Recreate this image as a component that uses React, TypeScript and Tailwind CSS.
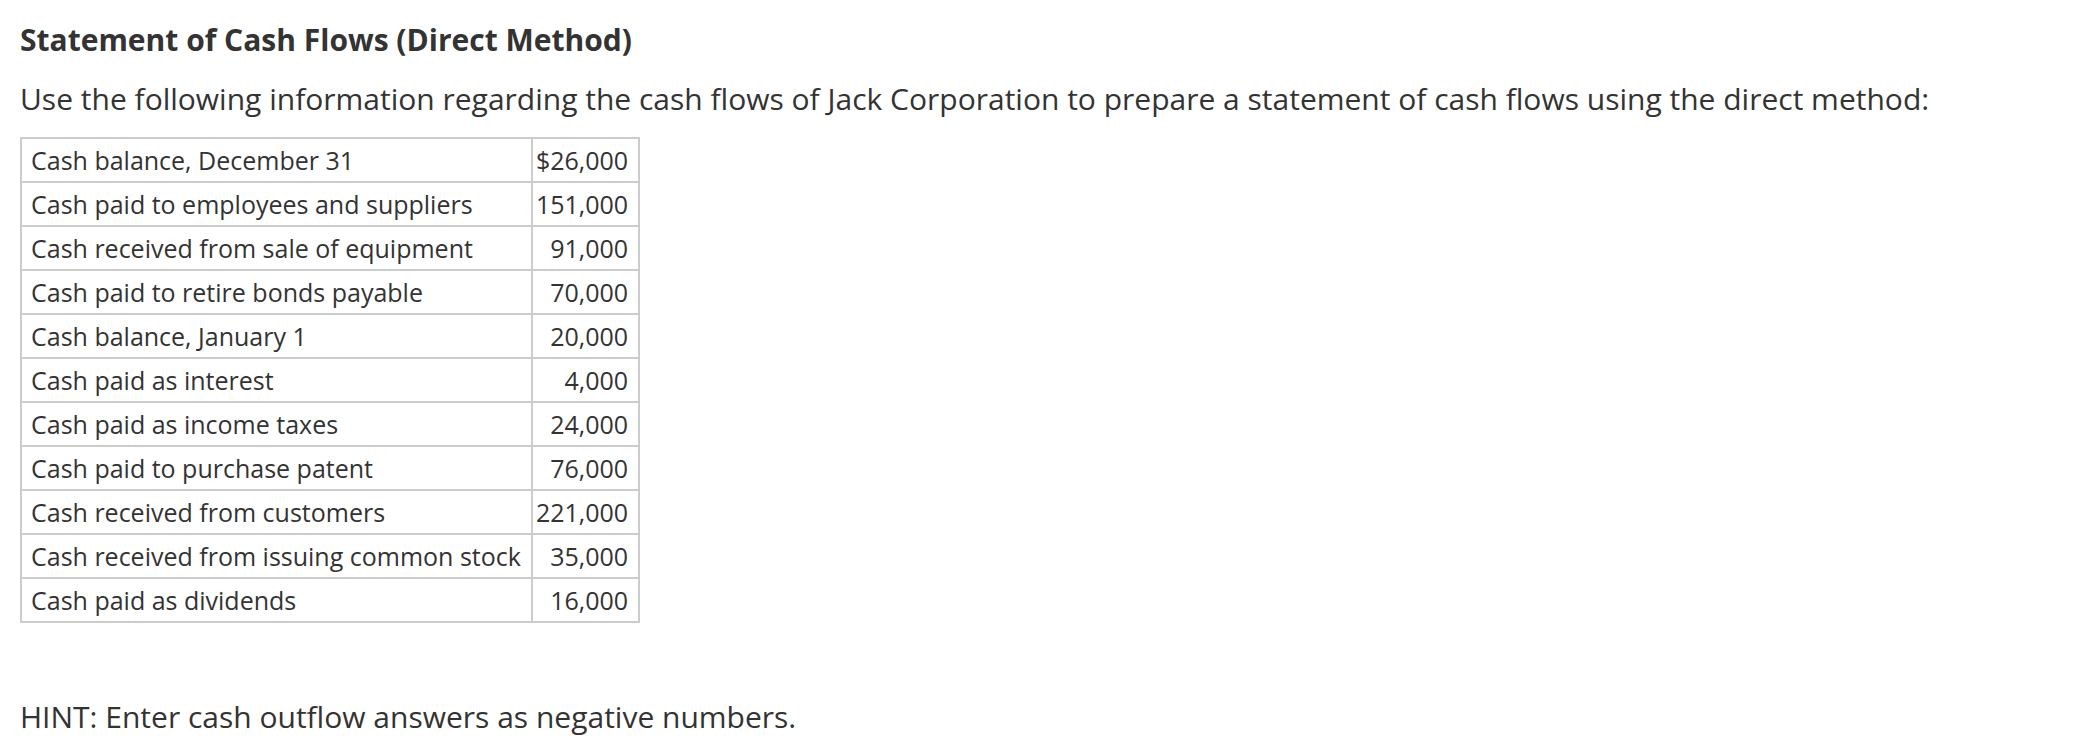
import React from "react";

const rows: [string, string][] = [
  ["Cash balance, December 31", "$26,000"],
  ["Cash paid to employees and suppliers", "151,000"],
  ["Cash received from sale of equipment", "91,000"],
  ["Cash paid to retire bonds payable", "70,000"],
  ["Cash balance, January 1", "20,000"],
  ["Cash paid as interest", "4,000"],
  ["Cash paid as income taxes", "24,000"],
  ["Cash paid to purchase patent", "76,000"],
  ["Cash received from customers", "221,000"],
  ["Cash received from issuing common stock", "35,000"],
  ["Cash paid as dividends", "16,000"],
];

export default function App() {
  return (
    <div
      className="min-h-screen bg-white px-[20px] pt-[20px] text-[#333333]"
      style={{ fontFamily: '"Open Sans", "Liberation Sans", sans-serif' }}
    >
      <h1 className="text-[30px] font-bold leading-[40px]">
        Statement of Cash Flows (Direct Method)
      </h1>
      <p className="mt-[19px] text-[30px] leading-[40px]">
        Use the following information regarding the cash flows of Jack Corporation to prepare a statement of cash flows using the direct method:
      </p>
      <table className="mt-[18px] border-collapse border-2 border-[#cccccc] text-[25px] leading-[32px]">
        <tbody>
          {rows.map(([label, value]) => (
            <tr key={label}>
              <td className="border-2 border-[#cccccc] py-[5px] pl-[9px] pr-[10px]">{label}</td>
              <td className="border-2 border-[#cccccc] py-[5px] pl-[3px] pr-[10px] text-right">{value}</td>
            </tr>
          ))}
        </tbody>
      </table>
      <p className="mt-[74px] text-[30px] leading-[40px]">
        HINT: Enter cash outflow answers as negative numbers.
      </p>
    </div>
  );
}
